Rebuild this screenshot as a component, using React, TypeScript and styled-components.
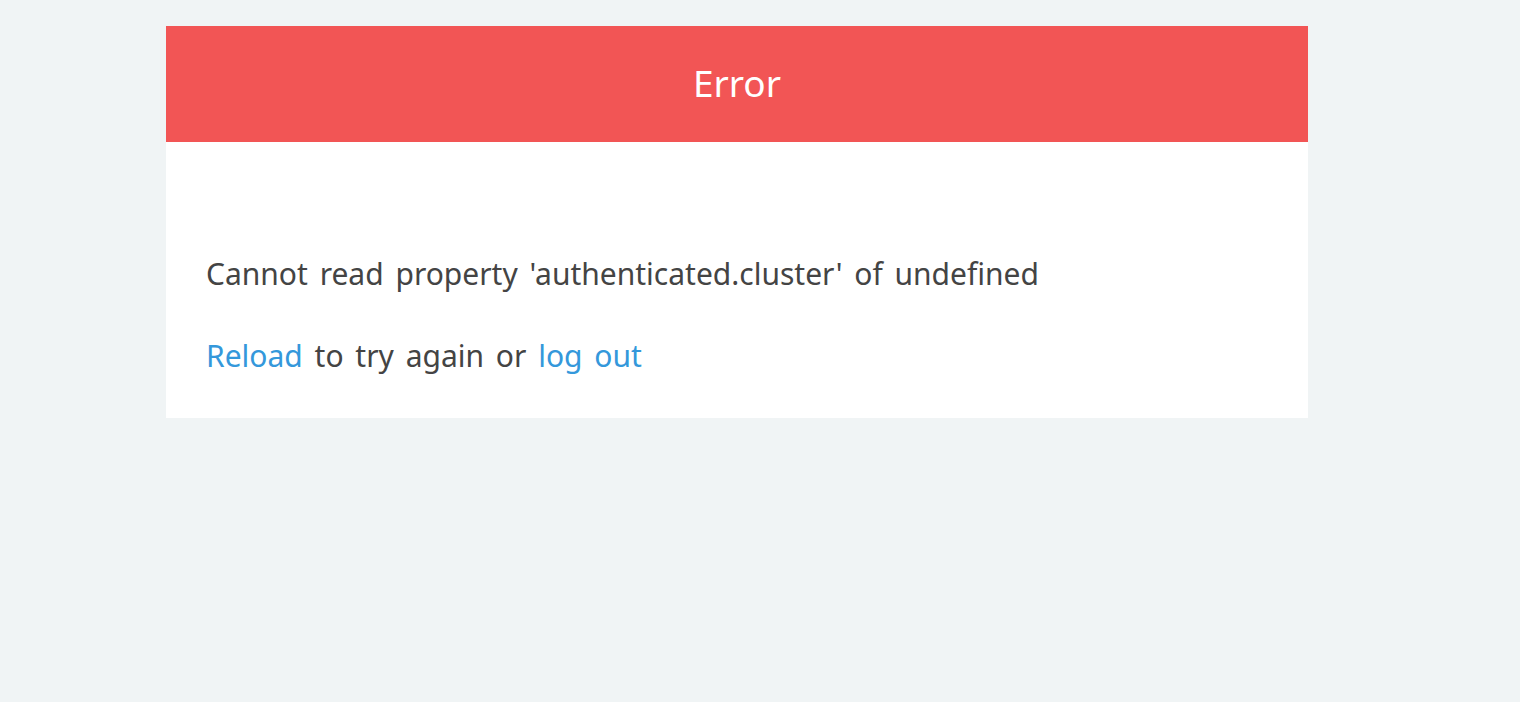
import React from "react";
import styled, { createGlobalStyle } from "styled-components";

const Global = createGlobalStyle`
  html, body { margin: 0; padding: 0; background: #f0f4f5; }
  body { font-family: "Noto Sans", "Open Sans", sans-serif; }
`;

const Page = styled.div`
  min-height: 702px;
  padding: 26px 212px 0 166px;
  box-sizing: border-box;
`;

const Card = styled.div`
  display: flex;
  flex-direction: column;
  background: #ffffff;
`;

const Header = styled.div`
  height: 116px;
  box-sizing: border-box;
  padding-bottom: 4px;
  background: #f25555;
  display: flex;
  align-items: center;
  justify-content: center;
  color: #ffffff;
  font-size: 37px;
  font-weight: 400;
`;

const Body = styled.div`
  height: 276px;
  box-sizing: border-box;
  padding: 114px 40px 0 40px;
  display: flex;
  flex-direction: column;
  gap: 46px;
  color: #444444;
  font-size: 30px;
  word-spacing: 4px;
`;

const Line = styled.div`
  line-height: 36px;
`;

const Link = styled.a`
  color: #3498db;
  text-decoration: none;
  cursor: pointer;
`;

export default function App() {
  return (
    <>
      <Global />
      <Page>
        <Card>
          <Header>Error</Header>
          <Body>
            <Line>Cannot read property 'authenticated.cluster' of undefined</Line>
            <Line>
              <Link>Reload</Link> to try again or <Link>log out</Link>
            </Line>
          </Body>
        </Card>
      </Page>
    </>
  );
}
